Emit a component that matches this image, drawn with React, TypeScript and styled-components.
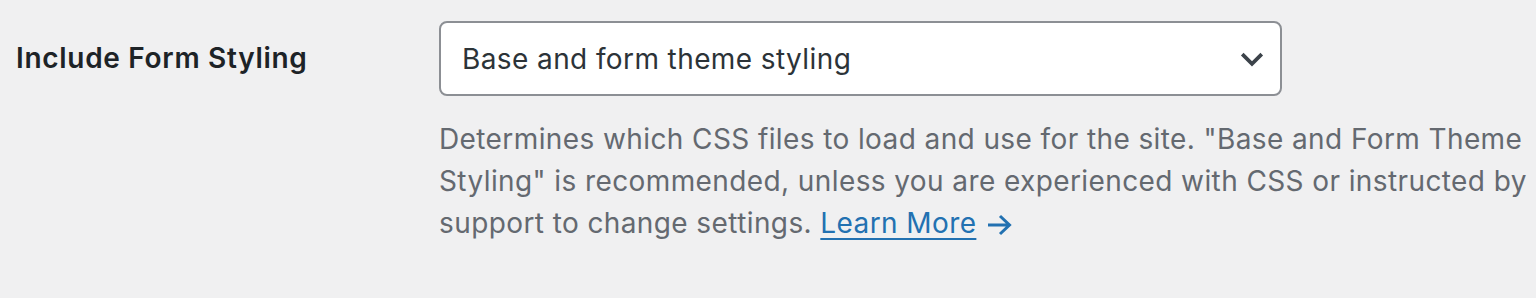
import styled, { createGlobalStyle } from 'styled-components';

const GlobalStyle = createGlobalStyle`
  html, body {
    margin: 0;
    padding: 0;
    background: #f0f0f1;
  }
  body {
    font-family: Inter, "Liberation Sans", sans-serif;
    -webkit-font-smoothing: antialiased;
  }
`;

const StyledRow = styled.div`
  display: grid;
  grid-template-columns: 423px 1fr;
  padding: 21px 0 0 16px;
`;

const StyledLabel = styled.label`
  font-size: 28px;
  font-weight: 600;
  color: #1d2327;
  line-height: 75px;
  letter-spacing: 0.7px;
`;

const StyledField = styled.div`
  display: flex;
  flex-direction: column;
`;

const StyledSelect = styled.div`
  box-sizing: border-box;
  width: 843px;
  height: 75px;
  display: flex;
  align-items: center;
  justify-content: space-between;
  padding: 0 15px 0 21px;
  background: #fff;
  border: 2px solid #8c8f94;
  border-radius: 8px;
  font-size: 28px;
  color: #2c3338;
  letter-spacing: 0.4px;
`;

const StyledDescription = styled.p`
  margin: 22px 0 0;
  font-size: 28px;
  line-height: 42px;
  color: #646970;
  letter-spacing: 0.4px;
  max-width: 1097px;
`;

const StyledLink = styled.a`
  color: #2271b1;
  text-decoration: underline;
  text-underline-offset: 5px;
  text-decoration-thickness: 2px;
`;

const StyledArrow = styled.svg`
  margin-left: 10px;
  vertical-align: -4px;
`;

export default function App() {
  return (
    <>
      <GlobalStyle />
      <StyledRow>
        <StyledLabel htmlFor="form-styling">Include Form Styling</StyledLabel>
        <StyledField>
          <StyledSelect id="form-styling">
            <span>Base and form theme styling</span>
            <svg width="26" height="26" viewBox="0 0 24 24" fill="none">
              <path
                d="M3 7.5l9 9 9-9"
                stroke="#3c434a"
                strokeWidth="3.4"
              />
            </svg>
          </StyledSelect>
          <StyledDescription>
            Determines which CSS files to load and use for the site. "Base and
            Form Theme Styling" is recommended, unless you are experienced with
            CSS or instructed by support to change settings.{' '}
            <StyledLink href="#">Learn More</StyledLink>
            <StyledArrow width="28" height="24" viewBox="0 0 28 24" fill="none">
              <path
                d="M2 12h22M14 3l9.5 9-9.5 9"
                stroke="#2271b1"
                strokeWidth="3"
              />
            </StyledArrow>
          </StyledDescription>
        </StyledField>
      </StyledRow>
    </>
  );
}
